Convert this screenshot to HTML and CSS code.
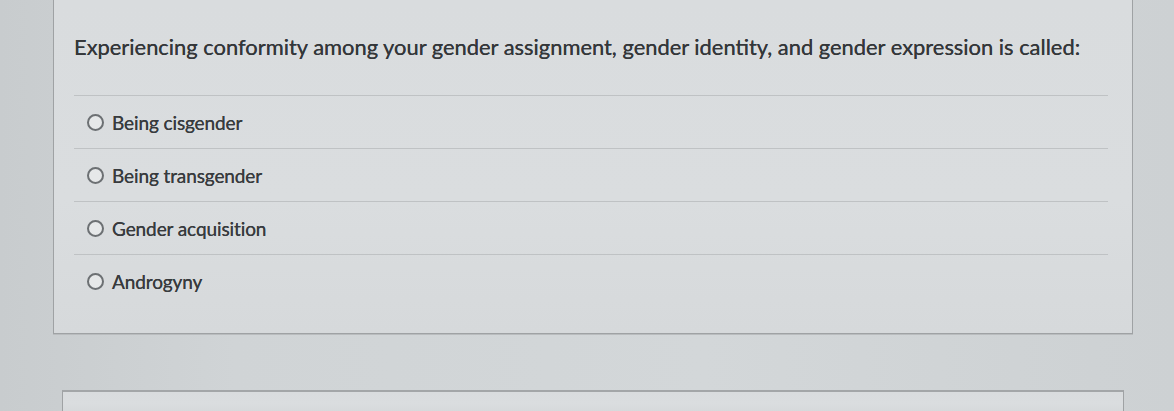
FILE: index.html
```html
<!DOCTYPE html>
<html>
<head>
<meta charset="utf-8">
<link rel="stylesheet" href="styles.css">
</head>
<body>
<div class="page">
  <div class="card">
    <div class="question">Experiencing conformity among your gender assignment, gender identity, and gender expression is called:</div>
    <div class="options">
      <label class="option"><span class="radio"></span><span class="label">Being cisgender</span></label>
      <label class="option"><span class="radio"></span><span class="label">Being transgender</span></label>
      <label class="option"><span class="radio"></span><span class="label">Gender acquisition</span></label>
      <label class="option"><span class="radio"></span><span class="label">Androgyny</span></label>
    </div>
  </div>
  <div class="card next"></div>
</div>
</body>
</html>
```

FILE: styles.css
```css
html, body {
  margin: 0;
  padding: 0;
}
body {
  width: 1174px;
  height: 411px;
  overflow: hidden;
  background: linear-gradient(90deg, #c8ccce 0%, #d0d4d6 20%, #d3d7d9 60%, #cdd1d3 100%);
  font-family: Lato, "Open Sans", sans-serif;
  color: #35383b;
}
.page {
  display: flex;
  flex-direction: column;
  padding-left: 53px;
}
.card {
  width: 1078px;
  background: linear-gradient(180deg, #d9dcde 0%, #dadddf 60%, #d6d9db 100%);
  border: 1px solid #9fa2a4;
  border-top: none;
  box-shadow: 0 1px 0 #b9bcbe;
}
.question {
  font-size: 21.9px;
  line-height: 26px;
  padding: 34px 0 0 20px;
  height: 61px;
  color: #34373a;
  text-shadow: 0 0 0.3px #34373a;
}
.options {
  margin: 0 24px 0 20px;
  border-top: 1px solid #bfc2c4;
  padding-bottom: 26px;
}
.option {
  display: flex;
  align-items: center;
  height: 52px;
  border-bottom: 1px solid #bfc2c4;
  padding-left: 13px;
  gap: 8px;
  font-size: 19px;
  color: #383b3e;
}
.option:last-child {
  border-bottom: none;
}
.radio {
  width: 13px;
  height: 13px;
  border: 2px solid #6c7073;
  border-radius: 50%;
  background: #e6e8e9;
  flex: none;
}
.label {
  letter-spacing: -0.1px;
  text-shadow: 0 0 0.2px #383b3e;
}
.next {
  margin-top: 56px;
  margin-left: 9px;
  width: 1060px;
  height: 20px;
  border-top: 2px solid #a3a6a8;
  border-bottom: none;
  box-shadow: none;
}
```
